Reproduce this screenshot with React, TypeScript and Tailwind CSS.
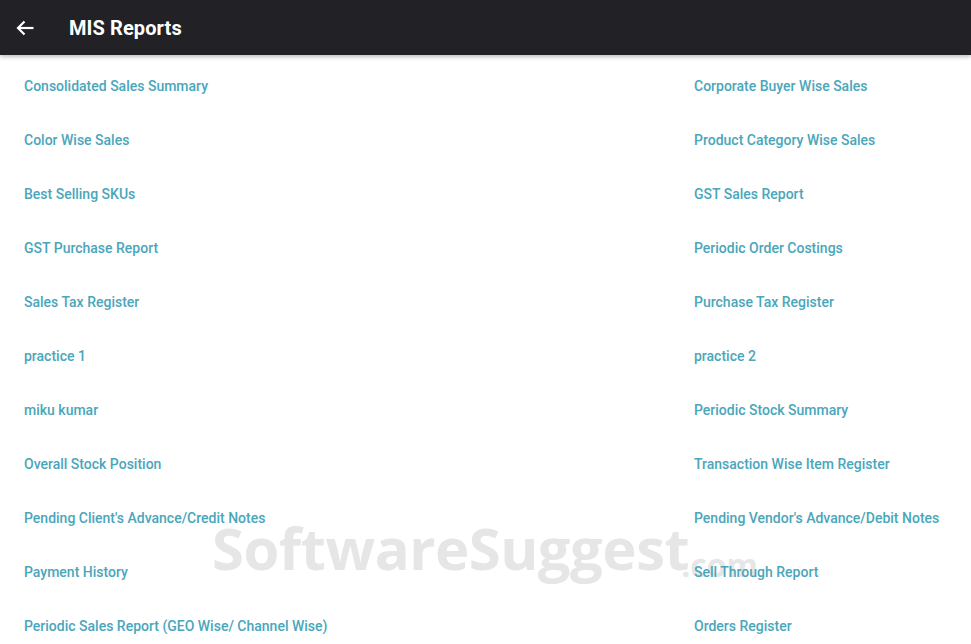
const left = [
  "Consolidated Sales Summary",
  "Color Wise Sales",
  "Best Selling SKUs",
  "GST Purchase Report",
  "Sales Tax Register",
  "practice 1",
  "miku kumar",
  "Overall Stock Position",
  "Pending Client's Advance/Credit Notes",
  "Payment History",
  "Periodic Sales Report (GEO Wise/ Channel Wise)",
];

const right = [
  "Corporate Buyer Wise Sales",
  "Product Category Wise Sales",
  "GST Sales Report",
  "Periodic Order Costings",
  "Purchase Tax Register",
  "practice 2",
  "Periodic Stock Summary",
  "Transaction Wise Item Register",
  "Pending Vendor's Advance/Debit Notes",
  "Sell Through Report",
  "Orders Register",
];

export default function App() {
  return (
    <div className="relative w-[971px] h-[644px] overflow-hidden bg-white font-['Roboto',sans-serif]">
      {/* watermark sits under the list */}
      <div className="absolute left-[212px] top-[504px] flex items-baseline text-[#e6e6e6] font-['Open_Sans',sans-serif] font-bold pointer-events-none select-none">
        <span className="text-[58px] tracking-[-0.5px]">SoftwareSuggest</span>
        <span className="text-[32px] -ml-[8px] translate-y-[7px]">.com</span>
      </div>
      <header className="h-[55px] bg-[#222125] flex items-center shadow-[0_2px_4px_rgba(0,0,0,0.25)] relative z-10">
        <svg className="ml-[16px] w-[18px] h-[16px]" viewBox="0 0 18 16" fill="none" stroke="white" strokeWidth="2.2">
          <path d="M17.5 8H2" />
          <path d="M8.5 1.5L2 8l6.5 6.5" />
        </svg>
        <h1 className="ml-[35px] text-white text-[20px] font-bold tracking-[0.1px]">MIS Reports</h1>
      </header>
      <div className="relative flex pt-[4px]">
        <div className="w-[694px] pl-[24px]">
          {left.map((t) => (
            <div key={t} className="h-[54px] flex items-center text-[14px] font-medium text-[#4aa6bb]">
              {t}
            </div>
          ))}
        </div>
        <div>
          {right.map((t) => (
            <div key={t} className="h-[54px] flex items-center text-[14px] font-medium text-[#4aa6bb]">
              {t}
            </div>
          ))}
        </div>
      </div>
    </div>
  );
}
